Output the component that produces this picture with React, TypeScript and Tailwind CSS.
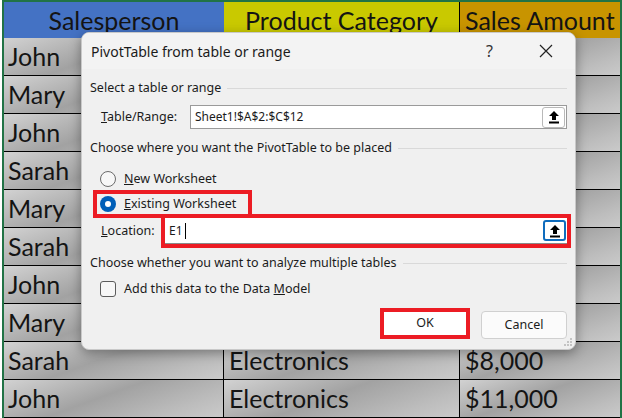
import React from 'react';

interface Row {
  name: string;
  category: string;
  amount: string;
}

const rows: Row[] = [
  { name: 'John', category: 'Electronics', amount: '$10,000' },
  { name: 'Mary', category: 'Clothing', amount: '$5,000' },
  { name: 'John', category: 'Furniture', amount: '$7,500' },
  { name: 'Sarah', category: 'Electronics', amount: '$9,000' },
  { name: 'Mary', category: 'Electronics', amount: '$6,000' },
  { name: 'Sarah', category: 'Clothing', amount: '$4,000' },
  { name: 'John', category: 'Clothing', amount: '$3,000' },
  { name: 'Mary', category: 'Furniture', amount: '$8,500' },
  { name: 'Sarah', category: 'Electronics', amount: '$8,000' },
  { name: 'John', category: 'Electronics', amount: '$11,000' },
];

const cellBg =
  'bg-[linear-gradient(160deg,#d2d2d2_0%,#a2a2a2_45%,#bdbdbd_80%,#cacaca_100%)]';

function UploadIcon() {
  return (
    <svg width="12" height="14" viewBox="0 0 12 14">
      <polygon points="6,1 11,6 8,6 8,10 4,10 4,6 1,6" fill="#000" />
      <rect x="1" y="11.5" width="10" height="2" fill="#000" />
    </svg>
  );
}

function RefButton({ active }: { active?: boolean }) {
  return (
    <div
      className={`flex h-[21px] w-[23px] items-center justify-center rounded-[3px] bg-white ${
        active ? 'border-[2px] border-[#0f6cbd]' : 'border border-[#b9b9b9]'
      }`}
    >
      <UploadIcon />
    </div>
  );
}

function Radio({ checked }: { checked?: boolean }) {
  if (checked) {
    return (
      <span className="flex h-[16px] w-[16px] items-center justify-center rounded-full bg-[#005fb8]">
        <span className="h-[6px] w-[6px] rounded-full bg-white" />
      </span>
    );
  }
  return <span className="h-[16px] w-[16px] rounded-full border border-[#6b6b6b] bg-[#f7f7f7]" />;
}

function SectionLabel({ text }: { text: string }) {
  return (
    <div className="flex h-[18px] items-center gap-[6px]">
      <span className="whitespace-nowrap">{text}</span>
      <span className="h-px flex-1 bg-[#d9d9d9]" />
    </div>
  );
}

function Dialog() {
  return (
    <div className="absolute left-[81px] top-[32px] w-[495px] overflow-hidden rounded-[8px] border border-[#c9c9c9] bg-[#f0f0f0] font-['Noto_Sans',sans-serif] text-[12.5px] text-[#1b1b1b] shadow-[0_3px_12px_rgba(0,0,0,0.35)]">
      {/* title bar */}
      <div className="flex h-[36px] items-center bg-[#f3f3f3] pl-[9px]">
        <span className="flex-1 text-[14px]">PivotTable from table or range</span>
        <span className="mr-[46px] text-[16px] text-[#333]">?</span>
        <svg width="14" height="14" viewBox="0 0 14 14" className="mr-[22px]">
          <path d="M1 1L13 13M13 1L1 13" stroke="#222" strokeWidth="1.2" />
        </svg>
      </div>

      {/* body */}
      <div className="flex flex-col px-[8px] pb-[10px] pt-[10px]">
        <SectionLabel text="Select a table or range" />

        <div className="mt-[8px] flex h-[24px] items-center pl-[11px]">
          <span className="w-[89px]">
            <span className="underline">T</span>able/Range:
          </span>
          <div className="flex h-[24px] flex-1 items-center justify-between border border-[#9a9a9a] bg-white pl-[4px] pr-[1px] text-[12px]">
            <span>Sheet1!$A$2:$C$12</span>
            <RefButton />
          </div>
        </div>

        <div className="mt-[10px]">
          <SectionLabel text="Choose where you want the PivotTable to be placed" />
        </div>

        <div className="mt-[12px] flex h-[20px] items-center gap-[8px] pl-[10px]">
          <Radio />
          <span>
            <span className="underline">N</span>ew Worksheet
          </span>
        </div>

        <div className="mt-[1px] flex">
          <div className="ml-[3px] flex h-[28px] items-center gap-[8px] border-[4px] border-[#ec1c24] pl-[3px] pr-[12px]">
            <Radio checked />
            <span>
              <span className="underline">E</span>xisting Worksheet
            </span>
          </div>
        </div>

        <div className="-mt-[4px] flex h-[34px] items-center pl-[11px]">
          <span className="w-[60px]">
            <span className="underline">L</span>ocation:
          </span>
          <div className="mr-[-4px] flex h-[34px] flex-1 border-[4px] border-[#ec1c24]">
            <div className="flex flex-1 items-center justify-between border-b border-[#8a8a8a] bg-white pl-[4px] pr-[1px] text-[12px]">
              <span className="flex items-center">
                E1<span className="ml-[2px] h-[16px] w-px bg-black" />
              </span>
              <RefButton active />
            </div>
          </div>
        </div>

        <div className="mt-[6px]">
          <SectionLabel text="Choose whether you want to analyze multiple tables" />
        </div>

        <div className="mt-[7px] flex h-[20px] items-center gap-[8px] pl-[10px]">
          <span className="h-[16px] w-[16px] rounded-[3px] border border-[#5c5c5c] bg-[#f7f7f7]" />
          <span>
            Add this data to the Data <span className="underline">M</span>odel
          </span>
        </div>

        <div className="mt-[9px] flex items-start justify-end gap-[11px]">
          <div className="flex h-[31px] w-[90px] border-[4px] border-[#ec1c24] bg-white">
            <span className="flex flex-1 items-center justify-center">OK</span>
          </div>
          <div className="mt-[3px] flex h-[28px] w-[86px] items-center justify-center rounded-[4px] border border-[#d0d0d0] bg-[#fbfbfb]">
            Cancel
          </div>
        </div>
      </div>

      {/* resize grip */}
      <svg width="10" height="10" viewBox="0 0 10 10" className="absolute bottom-[2px] right-[2px]">
        <rect x="7" y="1" width="2" height="2" fill="#c4c4c4" />
        <rect x="4" y="4" width="2" height="2" fill="#c4c4c4" />
        <rect x="7" y="4" width="2" height="2" fill="#c4c4c4" />
        <rect x="1" y="7" width="2" height="2" fill="#c4c4c4" />
        <rect x="4" y="7" width="2" height="2" fill="#c4c4c4" />
        <rect x="7" y="7" width="2" height="2" fill="#c4c4c4" />
      </svg>
    </div>
  );
}

export default function App() {
  return (
    <div className="relative h-[418px] w-[622px] overflow-hidden bg-white pl-[2px]">
      <div className="border-l-[2px] border-r-[2px] border-t-[2px] border-[#217346] font-['Lato',sans-serif] text-[25px] leading-[37px] text-[#141414]">
        {/* header */}
        <div className="grid h-[36px] grid-cols-[220px_236px_160px] border-b border-black">
          <div className="bg-[#4472c4] text-center">Salesperson</div>
          <div className="border-r border-black bg-[#c9c900] text-center">Product Category</div>
          <div className="overflow-hidden whitespace-nowrap bg-[#c89400] pl-[5px]">Sales Amount</div>
        </div>
        {rows.map((r, i) => (
          <div key={i} className="grid h-[38px] grid-cols-[220px_236px_160px] border-b border-black">
            <div className={`border-r border-black pl-[4px] ${cellBg}`}>{r.name}</div>
            <div className={`border-r border-black pl-[5px] ${cellBg}`}>{r.category}</div>
            <div className={`pl-[5px] ${cellBg}`}>{r.amount}</div>
          </div>
        ))}
      </div>
      <Dialog />
    </div>
  );
}
